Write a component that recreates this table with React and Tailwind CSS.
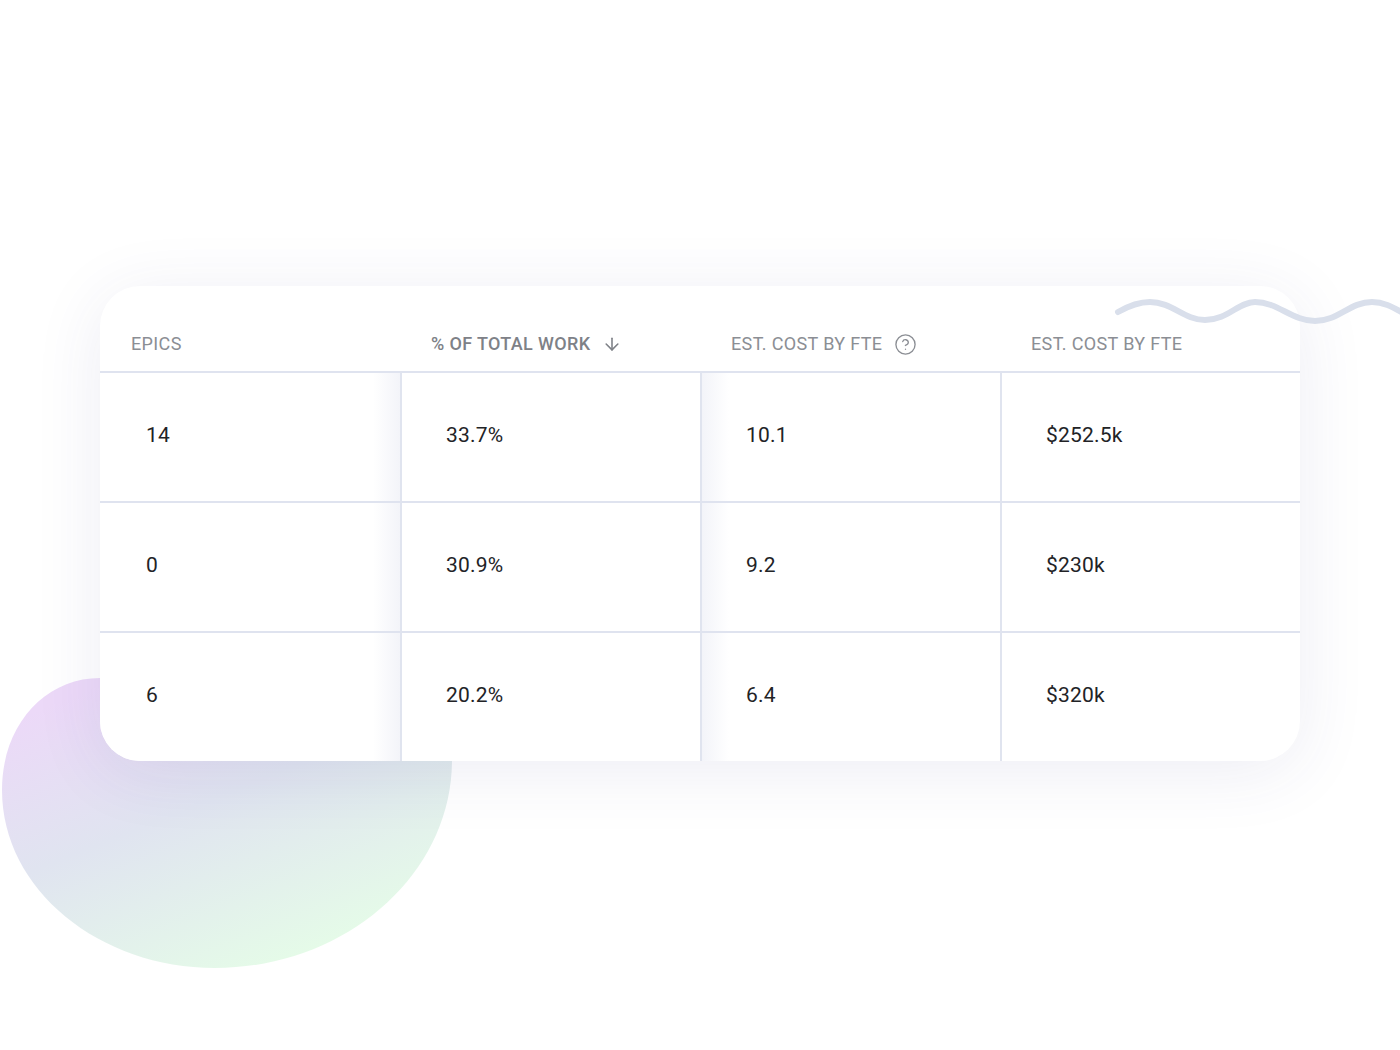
import { ArrowDown, CircleHelp } from 'lucide-react';

const rows = [
    ['14', '33.7%', '10.1', '$252.5k'],
    ['0', '30.9%', '9.2', '$230k'],
    ['6', '20.2%', '6.4', '$320k'],
];

function Blob() {
    return (
        <svg className="absolute left-0 top-[600px]" width="460" height="380" viewBox="0 0 460 380">
            <defs>
                <linearGradient id="blobFill" x1="0.1" y1="0.15" x2="0.6" y2="1">
                    <stop offset="0" stopColor="#ecd9f8" />
                    <stop offset="0.45" stopColor="#e0e4f0" />
                    <stop offset="1" stopColor="#e5fbe8" />
                </linearGradient>
            </defs>
            <path
                d="M100 78 C45 78 2 125 2 190 C2 290 100 368 215 368 C345 368 452 275 452 160 L452 60 L100 60 Z"
                fill="url(#blobFill)"
            />
        </svg>
    );
}

function Wave() {
    return (
        <svg className="absolute left-[1110px] top-[292px]" width="290" height="40" viewBox="0 0 290 40">
            <path
                d="M8 20 C22 12 32 10 40 10 C62 10 74 28 95 28 C118 28 128 10 145 10 C168 10 182 29 205 29 C228 29 240 10 262 10 C275 10 284 16 295 22"
                fill="none"
                stroke="#d9dfeb"
                strokeWidth="6"
                strokeLinecap="round"
            />
        </svg>
    );
}

export default function App() {
    const cellBg = [
        'bg-linear-to-r from-white from-[91%] to-[#f3f4f9]',
        'border-l-2 border-[#e0e4ef]',
        'border-l-2 border-[#e0e4ef] bg-linear-to-l from-white from-[91%] to-[#f3f4f9]',
        'border-l-2 border-[#e0e4ef]',
    ];
    return (
        <div className="relative min-h-[1050px] w-[1400px] overflow-hidden bg-white font-['Roboto',sans-serif]">
            <Blob />
            <div className="relative px-[100px] pt-[286px]">
                <div className="overflow-hidden rounded-[40px] bg-white shadow-[0_10px_70px_rgba(50,60,130,0.09)]">
                    <div className="grid grid-cols-4 border-b-2 border-[#dfe3ef] pt-[46px] pb-[15px] text-[18px] leading-6 tracking-[0.02em] text-[#8b8e94]">
                        <div className="pl-[31px]">EPICS</div>
                        <div className="flex items-center gap-[12px] pl-[31px] font-medium text-[#7e8187]">
                            % OF TOTAL WORK
                            <ArrowDown size={20} strokeWidth={1.9} />
                        </div>
                        <div className="flex items-center gap-[12px] pl-[31px]">
                            EST. COST BY FTE
                            <CircleHelp size={23} strokeWidth={1.4} />
                        </div>
                        <div className="pl-[31px]">EST. COST BY FTE</div>
                    </div>
                    {rows.map((row, i) => (
                        <div key={i} className={`grid grid-cols-4 ${i < rows.length - 1 ? 'border-b-2 border-[#dfe3ef]' : ''}`}>
                            {row.map((value, j) => (
                                <div key={j} className={`flex h-[128px] items-start pt-[48px] text-[21px] leading-7 tracking-[0.01em] text-[#222326] ${j === 0 ? 'pl-[46px]' : 'pl-[44px]'} ${cellBg[j]}`}>
                                    {value}
                                </div>
                            ))}
                        </div>
                    ))}
                </div>
            </div>
            <Wave />
        </div>
    );
}
